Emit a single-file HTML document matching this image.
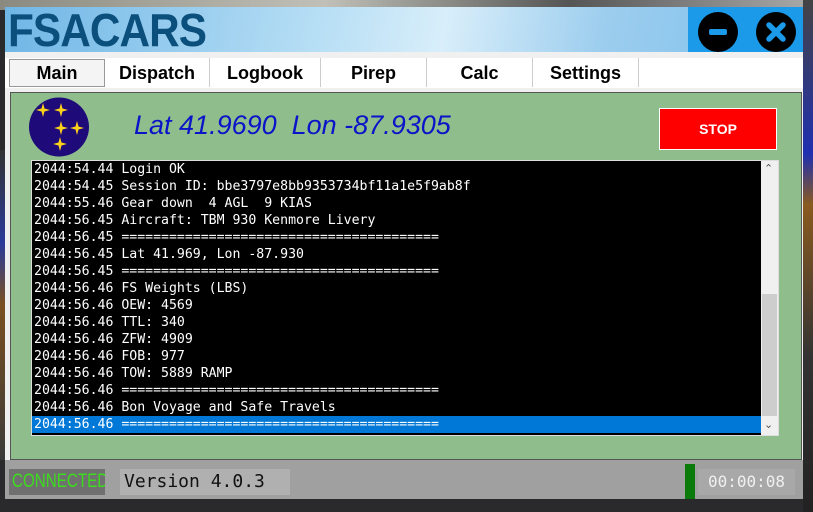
<!DOCTYPE html>
<html><head><style>
body{margin:0;width:813px;height:512px;overflow:hidden;background:#2a2a2c;font-family:"Liberation Sans",sans-serif;position:relative}
.bgtop{position:absolute;left:0;top:0;width:813px;height:10px;background:linear-gradient(90deg,#8a8a80,#c0c0b8 40%,#555 70%,#aaa)}
.bgl{position:absolute;left:0;top:150px;width:10px;height:310px;background:linear-gradient(#333,#2a3a9a 30%,#7a5020 50%,#3a3a3a)}
.bgr{position:absolute;left:803px;top:0;width:10px;height:512px;background:linear-gradient(#444,#2030b0 30%,#8a5a20 40%,#333 70%,#222)}
.win{position:absolute;left:5px;top:7px;width:798px;height:492px;background:#f0f0f0}
.title{position:absolute;left:0;top:0;width:798px;height:45px;background:linear-gradient(100deg,#6fb6e6,#b8dff5 40%,#d8eefa 55%,#9ccdee 75%,#7cc0ec)}
.title .r{position:absolute;right:0;top:0;width:115px;height:45px;background:#1a9ae8}
.logo{position:absolute;left:3px;top:-4px;font-weight:bold;font-size:46px;color:#0b4f7c;letter-spacing:-1px;transform:scaleX(.92);transform-origin:left}
.btn{position:absolute;top:5px;width:40px;height:40px;border-radius:50%;background:#000}
.tabs{position:absolute;left:0;top:51px;width:798px;height:30px;background:#fff}
.tab{position:absolute;top:0;height:29px;font-weight:bold;font-size:18px;text-align:center;line-height:30px;border-right:1px solid #ccc}
.panel{position:absolute;left:5px;top:85px;width:790px;height:366px;background:#8fbd8c;border:1px solid #555}
.log{position:absolute;left:20px;top:67px;width:746px;height:274px;background:#000;border:1px solid #ddd;overflow:hidden}
.ln{height:17px;line-height:17px;font-family:"DejaVu Sans Mono",monospace;font-size:13.2px;color:#fff;padding-left:2px;white-space:pre}
.sel{background:#0078d7}
.sb{position:absolute;right:0;top:0;width:17px;height:274px;background:#f0f0f0}
.status{position:absolute;left:0;top:453px;width:798px;height:39px;background:#a0a0a0}
</style></head><body>
<div class="bgtop"></div><div class="bgl"></div><div class="bgr"></div>
<div class="win">
<div class="title"><div class="r"></div><div class="logo">FSACARS</div>
<div class="btn" style="left:693px"><div style="position:absolute;left:11px;top:17px;width:18px;height:6px;background:#1a9ae8;border-radius:2px"></div></div>
<div class="btn" style="left:751px"><svg width="40" height="40"><path d="M13 13L27 27M27 13L13 27" stroke="#1a9ae8" stroke-width="5.5" stroke-linecap="round"/></svg></div>
</div>
<div class="tabs">
<div class="tab" style="left:4px;width:94px;top:1px;height:26px;border:1px solid #999;background:#f4f4f4;line-height:27px">Main</div>
<div class="tab" style="left:100px;width:104px">Dispatch</div>
<div class="tab" style="left:205px;width:110px">Logbook</div>
<div class="tab" style="left:316px;width:105px">Pirep</div>
<div class="tab" style="left:422px;width:105px">Calc</div>
<div class="tab" style="left:528px;width:105px">Settings</div>
</div>
<div class="panel">
<svg style="position:absolute;left:18px;top:4px" width="62" height="62"><ellipse cx="30" cy="30" rx="30" ry="29.5" fill="#1e0a78"/>
<defs><path id="s" d="M0 -7L1.5 -1.5L7 0L1.5 1.5L0 7L-1.5 1.5L-7 0L-1.5 -1.5Z" fill="#ffd21a"/></defs>
<use href="#s" x="14" y="13"/><use href="#s" x="32" y="13"/><use href="#s" x="32" y="31"/><use href="#s" x="48" y="31"/><use href="#s" x="31" y="47"/></svg>
<div style="position:absolute;left:123px;top:17px;font-size:27px;font-style:italic;color:#0a14c8">Lat 41.9690&nbsp; Lon -87.9305</div>
<div style="position:absolute;left:648px;top:15px;width:116px;height:40px;background:#ff0000;border:1px solid #fff;color:#fff;font-weight:bold;font-size:14px;text-align:center;line-height:40px">STOP</div>
<div class="log">
<div class="ln">2044:54.44 Login OK</div>
<div class="ln">2044:54.45 Session ID: bbe3797e8bb9353734bf11a1e5f9ab8f</div>
<div class="ln">2044:55.46 Gear down  4 AGL  9 KIAS</div>
<div class="ln">2044:56.45 Aircraft: TBM 930 Kenmore Livery</div>
<div class="ln">2044:56.45 ========================================</div>
<div class="ln">2044:56.45 Lat 41.969, Lon -87.930</div>
<div class="ln">2044:56.45 ========================================</div>
<div class="ln">2044:56.46 FS Weights (LBS)</div>
<div class="ln">2044:56.46 OEW: 4569</div>
<div class="ln">2044:56.46 TTL: 340</div>
<div class="ln">2044:56.46 ZFW: 4909</div>
<div class="ln">2044:56.46 FOB: 977</div>
<div class="ln">2044:56.46 TOW: 5889 RAMP</div>
<div class="ln">2044:56.46 ========================================</div>
<div class="ln">2044:56.46 Bon Voyage and Safe Travels</div>
<div class="ln sel">2044:56.46 ========================================</div>
<div class="sb"><div style="position:absolute;left:3px;top:1px;font-size:11px;color:#555">&#8963;</div>
<div style="position:absolute;left:1px;top:133px;width:15px;height:122px;background:#cdcdcd"></div>
<div style="position:absolute;left:3px;top:257px;font-size:11px;color:#555">&#8964;</div></div>
</div>
</div>
<div class="status">
<div style="position:absolute;left:4px;top:9px;width:96px;height:26px;background:#707070;overflow:hidden"><div style="position:absolute;left:3px;top:0;color:#3cdc1e;font-family:'Liberation Sans',sans-serif;font-size:19px;line-height:26px;white-space:nowrap;transform:scaleX(.8);transform-origin:left">CONNECTED</div></div>
<div style="position:absolute;left:115px;top:9px;width:166px;height:26px;background:#b0b0b0;color:#111;font-family:'DejaVu Sans Mono',monospace;font-size:18px;line-height:26px;padding-left:4px">Version 4.0.3</div>
<div style="position:absolute;left:680px;top:4px;width:10px;height:35px;background:#0a7a0a"></div>
<div style="position:absolute;left:693px;top:9px;width:97px;height:26px;background:#a8a8a8;color:#f0f0f0;font-family:'DejaVu Sans Mono',monospace;font-size:16px;line-height:26px;text-align:center">00:00:08</div>
</div>
</div>
</body></html>
